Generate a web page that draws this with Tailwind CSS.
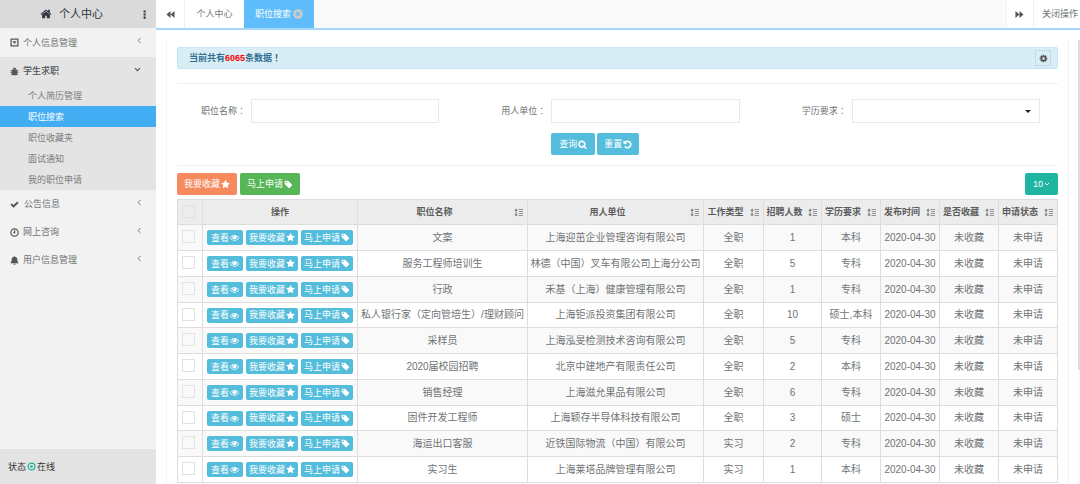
<!DOCTYPE html>
<html lang="zh-CN">
<head>
<meta charset="utf-8">
<meta name="viewport" content="width=device-width, initial-scale=1">
<title>职位搜索</title>
<script src="https://cdn.jsdelivr.net/npm/@tailwindcss/browser@4"></script>
</head>
<body class="flex h-screen overflow-hidden bg-white font-['Liberation_Sans','Noto_Sans_CJK_SC',sans-serif] text-[9px] leading-[14px] text-[#707375]">

<svg class="hidden" aria-hidden="true">
  <symbol id="star" viewBox="0 0 1792 1792"><path d="M1728 647q0 22-26 48l-363 354 86 500q1 7 1 20 0 21-10.500 35.500t-30.500 14.500q-19 0-40-12l-449-236-449 236q-22 12-40 12-21 0-31.500-14.500t-10.500-35.500q0-6 2-20l86-500-364-354q-25-27-25-48 0-37 56-46l502-73 225-455q19-41 49-41t49 41l225 455 502 73q56 9 56 46z"/></symbol>
  <symbol id="tag" viewBox="0 0 1792 1792"><path d="M576 448q0-53-37.500-90.500t-90.500-37.500-90.500 37.500-37.500 90.500 37.500 90.500 90.500 37.500 90.500-37.500 37.500-90.500zm1067 576q0 53-37 90l-491 492q-39 37-91 37-53 0-90-37l-715-716q-38-37-64.500-101t-26.500-117v-416q0-52 38-90t90-38h416q53 0 117 26.500t102 64.500l715 714q37 39 37 91z"/></symbol>
  <symbol id="search" viewBox="0 0 1792 1792"><path d="M1216 832q0-185-131.500-316.500t-316.500-131.500-316.500 131.500-131.500 316.500 131.500 316.500 316.500 131.500 316.500-131.500 131.500-316.500zm512 832q0 52-38 90t-90 38q-54 0-90-38l-343-342q-179 124-399 124-143 0-273.500-55.500t-225-150-150-225-55.500-273.500 55.500-273.500 150-225 225-150 273.500-55.500 273.500 55.500 225 150 150 225 55.500 273.500q0 220-124 399l343 343q37 37 37 90z" stroke="currentColor" stroke-width="90"/></symbol>
  <symbol id="eye" viewBox="0 0 1792 1792"><path d="M1664 960q-152-236-381-353 61 104 61 225 0 185-131.500 316.500t-316.500 131.500-316.500-131.500-131.500-316.500q0-121 61-225-229 117-381 353 133 205 333.500 326.500t434.500 121.500 434.500-121.500 333.500-326.500zm-720-384q0-20-14-34t-34-14q-125 0-214.500 89.500t-89.500 214.500q0 20 14 34t34 14 34-14 14-34q0-86 61-147t147-61q20 0 34-14t14-34zm848 384q0 34-20 69-140 230-376.500 368.500t-499.500 138.500-499.500-139-376.500-368q-20-35-20-69t20-69q140-229 376.500-368t499.500-139 499.500 139 376.500 368q20 35 20 69z"/></symbol>
  <symbol id="home" viewBox="0 0 1792 1792"><path d="M1472 992v480q0 26-19 45t-45 19h-384v-384h-256v384h-384q-26 0-45-19t-19-45v-480q0-1 .5-3t.5-3l575-474 575 474q1 2 1 6zm223-69l-62 74q-8 9-21 11h-3q-13 0-21-7l-692-577-692 577q-12 8-24 7-13-2-21-11l-62-74q-8-10-7-23.500t11-21.500l719-599q32-26 76-26t76 26l244 204v-195q0-14 9-23t23-9h192q14 0 23 9t9 23v408l219 182q10 8 11 21.500t-7 23.500z"/></symbol>
  <symbol id="check" viewBox="0 0 1792 1792"><path d="M1671 566q0 40-28 68l-724 724-136 136q-28 28-68 28t-68-28l-136-136-362-362q-28-28-28-68t28-68l136-136q28-28 68-28t68 28l294 295 656-657q28-28 68-28t68 28l136 136q28 28 28 68z"/></symbol>
  <symbol id="undo" viewBox="0 0 1792 1792"><path d="M1664 896q0 156-61 298t-164 245-245 164-298 61q-172 0-327-72.500t-264-204.500q-7-10-6.500-22.500t8.500-20.500l137-138q10-9 25-9 16 2 23 12 73 95 179 147t225 52q104 0 198.500-40.500t163.500-109.500 109.500-163.500 40.500-198.500-40.500-198.500-109.500-163.500-163.500-109.500-198.500-40.500q-98 0-188 35.500t-160 101.500l137 138q31 30 14 69-17 40-59 40h-448q-26 0-45-19t-19-45v-448q0-42 40-59 39-17 69 14l130 129q107-101 244.500-156.500t284.500-55.500q156 0 298 61t245 164 164 245 61 298z" stroke="currentColor" stroke-width="70"/></symbol>
  <symbol id="cog" viewBox="0 0 1792 1792"><path d="M1152 896q0-106-75-181t-181-75-181 75-75 181 75 181 181 75 181-75 75-181zm512-109v222q0 12-8 23t-20 13l-185 28q-19 54-39 91 35 50 107 138 10 12 10 25t-9 23q-27 37-99 108t-94 71q-12 0-26-9l-138-108q-44 23-91 38-16 136-29 186-7 28-36 28h-222q-14 0-24.500-8.500t-11.500-21.500l-28-184q-49-16-90-37l-141 107q-10 9-25 9-14 0-25-11-126-114-165-168-7-10-7-23 0-12 8-23 15-21 51-66.500t54-70.500q-27-50-41-99l-183-27q-13-2-21-12.500t-8-23.500v-222q0-12 8-23t19-13l186-28q14-46 39-92-40-57-107-138-10-12-10-24 0-10 9-23 26-36 98.500-107.500t94.500-71.500q13 0 26 10l138 107q44-23 91-38 16-136 29-186 7-28 36-28h222q14 0 24.500 8.500t11.500 21.500l28 184q49 16 90 37l142-107q9-9 24-9 13 0 25 10 129 119 165 170 7 8 7 22 0 12-8 23-15 21-51 66.500t-54 70.500q26 50 41 98l183 28q13 2 21 12.500t8 23.500z"/></symbol>
  <symbol id="back" viewBox="0 0 10 10"><path d="M5 1v8L.5 5zM9.500 1v8L5 5z"/></symbol>
  <symbol id="fwd" viewBox="0 0 10 10"><path d="M.5 1v8L5 5zM5 1v8l4.500-4z"/></symbol>
  <symbol id="caretbox" viewBox="0 0 10 10"><path fill-rule="evenodd" d="M1.500.5h7a1 1 0 0 1 1 1v7a1 1 0 0 1-1 1h-7a1 1 0 0 1-1-1v-7a1 1 0 0 1 1-1zm.4 1.400v6.200h6.200V1.900zM2.700 3.600h4.600L5 6.800z"/></symbol>
  <symbol id="bug" viewBox="0 0 10 10"><path d="M3 2.700C3 .1 7 .1 7 2.700zM2.200 3.100h5.600v5.100c-1 1.400-4.600 1.400-5.600 0zM.8 3.200l1.500.8v.9L.8 4.100zM9.200 3.200l-1.500.8v.9l1.500-.8zM.5 5.400h1.800v.9H.5zM7.700 5.400h1.800v.9H7.700zM.8 8.600l1.500-1.400v1.200L1.300 9.300zM9.200 8.600L7.700 7.200v1.200l1 .9z"/></symbol>
  <symbol id="clock" viewBox="0 0 10 10"><g fill="none" stroke="currentColor" stroke-width="1.300"><circle cx="5" cy="5" r="4.100"/><path d="M5.200 2.600v2.700H3.400"/></g></symbol>
  <symbol id="bell" viewBox="0 0 10 10"><path d="M5 .2c.5 0 .7.300.7.700C7.300 1.300 8.200 2.500 8.200 4.200c0 1.800.5 2.900 1.600 3.900H.2C1.300 7.100 1.800 6 1.800 4.200c0-1.700.9-2.900 2.500-3.300 0-.4.2-.7.700-.7zM3.700 8.500h2.600c0 1.600-2.600 1.600-2.600 0z"/></symbol>
  <symbol id="left" viewBox="0 0 10 10"><path d="M6.500 1.500L3 5l3.500 3.500" fill="none" stroke="currentColor" stroke-width="1.400"/></symbol>
  <symbol id="down" viewBox="0 0 10 10"><path d="M1.500 3.200L5 6.700l3.500-3.500" fill="none" stroke="currentColor" stroke-width="1.500"/></symbol>
  <symbol id="dots" viewBox="0 0 10 10"><path d="M4 .5h2.300v2.300H4zM4 3.900h2.300v2.300H4zM4 7.300h2.300v2.300H4z"/></symbol>
  <symbol id="sort" viewBox="0 0 10 10"><path d="M2.300.5L4.300 3H2.800v4h1.500l-2 2.500L.3 7h1.500V3H.3zM5 1h5v.9H5zM5.500 3.300H10v.9H5.500zM5.500 5.700H10v.9H5.500zM5 8h5v.9H5z"/></symbol>
  <symbol id="close" viewBox="0 0 10 10"><circle cx="5" cy="5" r="4.800"/><path d="M3.200 3.200l3.600 3.600M6.800 3.200L3.200 6.800" stroke="#5fbdfb" stroke-width="1.300"/></symbol>
  <symbol id="ring" viewBox="0 0 10 10"><circle cx="5" cy="5" r="3.800" fill="none" stroke="currentColor" stroke-width="1.300"/><circle cx="5" cy="5" r="1.500"/></symbol>
</svg>

<aside class="flex w-[156px] shrink-0 flex-col bg-[#f2f2f2]">
  <header class="flex h-7 shrink-0 items-center justify-between bg-[#dadada] pr-[7px] pl-10 text-[11px] text-[#2f3640]">
    <a href="#" class="flex items-center gap-[7px]"><svg class="size-3 fill-current"><use href="#home"/></svg>个人中心</a>
    <button type="button" aria-label="菜单"><svg class="size-[9px] fill-current"><use href="#dots"/></svg></button>
  </header>
  <nav class="flex-1">
    <a href="#" class="flex h-[29px] items-center gap-1 pr-[13px] pl-[10px]"><svg class="size-[9px] fill-[#555]"><use href="#caretbox"/></svg><span class="flex-1">个人信息管理</span><svg class="mb-1 size-[7px]"><use href="#left"/></svg></a>
    <div class="bg-[#e4e4e4]">
      <a href="#" class="flex h-7 items-center gap-1 pr-[15px] pl-[10px] font-medium text-[#4c5257]"><svg class="size-[9px] fill-[#555]"><use href="#bug"/></svg><span class="flex-1">学生求职</span><svg class="mb-1 size-[7px]"><use href="#down"/></svg></a>
      <a href="#" class="flex h-[21px] items-center pl-7 text-[#7b7d7f]">个人简历管理</a>
      <a href="#" class="flex h-[21px] items-center bg-[#42adf2] pl-7 text-white">职位搜索</a>
      <a href="#" class="flex h-[21px] items-center pl-7 text-[#7b7d7f]">职位收藏夹</a>
      <a href="#" class="flex h-[21px] items-center pl-7 text-[#7b7d7f]">面试通知</a>
      <a href="#" class="flex h-[21px] items-center pl-7 text-[#7b7d7f]">我的职位申请</a>
    </div>
    <a href="#" class="flex h-7 items-center gap-[5px] pr-[13px] pl-[10px]"><svg class="size-[9px] fill-[#555]"><use href="#check"/></svg><span class="flex-1">公告信息</span><svg class="mb-1 size-[7px]"><use href="#left"/></svg></a>
    <a href="#" class="flex h-7 items-center gap-1 pr-[13px] pl-[10px]"><svg class="size-[9px] text-[#555]"><use href="#clock"/></svg><span class="flex-1">网上咨询</span><svg class="mb-1 size-[7px]"><use href="#left"/></svg></a>
    <a href="#" class="flex h-7 items-center gap-1 pr-[13px] pl-[10px]"><svg class="size-[9px] fill-[#555]"><use href="#bell"/></svg><span class="flex-1">用户信息管理</span><svg class="mb-1 size-[7px]"><use href="#left"/></svg></a>
  </nav>
  <footer class="flex h-[35px] shrink-0 items-center gap-px bg-[#e3e3e3] pl-2 text-[#333]">状态<svg class="size-[9px] fill-current text-[#1ab394]"><use href="#ring"/></svg>在线</footer>
</aside>

<main class="flex min-w-0 flex-1 flex-col">
  <div class="flex h-[30px] shrink-0 border-b-2 border-[#a3d5fd] bg-[#fafafa]">
    <button type="button" aria-label="向左" class="flex w-[29px] items-center justify-center border-r border-[#eee] bg-white text-[#555]"><svg class="size-[9px] fill-current"><use href="#back"/></svg></button>
    <a href="#" class="flex w-[59px] items-center justify-center bg-white text-[#777]">个人中心</a>
    <a href="#" class="flex w-[70px] items-center justify-center gap-[2px] bg-[#5fbdfb] text-white">职位搜索<svg class="size-[10px] fill-[#ccc]"><use href="#close"/></svg></a>
    <div class="flex-1"></div>
    <button type="button" aria-label="向右" class="flex w-7 items-center justify-center border-x border-[#f0f0f0] bg-white text-[#555]"><svg class="size-[9px] fill-current"><use href="#fwd"/></svg></button>
    <button type="button" class="bg-white pr-[2px] pl-[8px] whitespace-nowrap">关闭操作</button>
  </div>

  <div class="flex min-h-0 flex-1 pt-[10px] pl-[10px]">
    <section class="min-w-0 flex-1 border-x border-[#f4f4f4] px-[10px] pt-[7px]">
      <div class="flex h-[22px] items-center justify-between rounded-[2px] border border-[#c5e7ef] bg-[#d9edf7] pr-[6px] pl-[11px]">
        <p class="font-bold text-[#31708f]">当前共有<span class="text-[#f00]">6065</span>条数据<span lang="zh-TW" class="font-['Noto_Sans_CJK_TC',sans-serif]">！</span></p>
        <button type="button" aria-label="设置" class="flex size-4 items-center justify-center border border-[#bfdcea] text-[#555]"><svg class="size-[9px] fill-current"><use href="#cog"/></svg></button>
      </div>
      <hr class="mt-[14px] border-[#f0f0f0]">
      <form class="mt-[15px]">
        <div class="-mx-[10px] grid grid-cols-3">
          <div class="flex items-center gap-[5px] pr-7 pl-[34px]"><label for="job" class="shrink-0">职位名称<span lang="zh-TW" class="font-['Noto_Sans_CJK_TC',sans-serif]">：</span></label><input id="job" type="text" class="h-6 w-full min-w-0 flex-1 border border-[#e8e8e8] bg-white px-2"></div>
          <div class="flex items-center gap-[5px] pr-7 pl-[34px]"><label for="company" class="shrink-0">用人单位<span lang="zh-TW" class="font-['Noto_Sans_CJK_TC',sans-serif]">：</span></label><input id="company" type="text" class="h-6 w-full min-w-0 flex-1 border border-[#e8e8e8] bg-white px-2"></div>
          <div class="flex items-center gap-[5px] pr-7 pl-[34px]"><label for="degree" class="shrink-0">学历要求<span lang="zh-TW" class="font-['Noto_Sans_CJK_TC',sans-serif]">：</span></label>
            <div class="relative flex-1"><select id="degree" class="block h-6 w-full appearance-none border border-[#e8e8e8] bg-white px-2"><option></option><option>本科</option><option>专科</option><option>硕士</option></select><span class="pointer-events-none absolute top-[11px] right-[9px] border-x-3 border-t-3 border-x-transparent border-t-[#222]"></span></div>
          </div>
        </div>
        <div class="-mx-[10px] mt-[10px] grid grid-cols-3 text-white">
          <div class="col-start-2 flex gap-[2px] pl-[84px]">
            <button type="submit" class="flex h-[22px] items-center gap-px rounded-[2px] bg-[#54bddb] px-2">查询<svg class="size-[9px] fill-current"><use href="#search"/></svg></button>
            <button type="reset" class="flex h-[22px] items-center gap-px rounded-[2px] bg-[#54bddb] px-[7px]">重置<svg class="size-[9px] fill-current"><use href="#undo"/></svg></button>
          </div>
        </div>
      </form>
      <hr class="mt-[10px] border-[#f0f0f0]">
      <div class="mt-[7px] flex gap-[3px] text-white">
        <button type="button" class="flex h-[22px] items-center gap-px rounded-[2px] bg-[#f68a5c] px-[7px]">我要收藏<svg class="size-[9px] fill-current"><use href="#star"/></svg></button>
        <button type="button" class="flex h-[22px] items-center gap-px rounded-[2px] bg-[#57b757] px-[7px]">马上申请<svg class="size-[9px] fill-current"><use href="#tag"/></svg></button>
        <button type="button" class="ml-auto flex h-[22px] items-center gap-px rounded-[2px] bg-[#20b5a0] px-[8px]">10<svg class="size-[6px]"><use href="#down"/></svg></button>
      </div>
      <table class="mt-1 w-full table-fixed border-collapse text-center whitespace-nowrap">
        <colgroup><col class="w-[25px]"><col class="w-[155px]"><col class="w-[170px]"><col class="w-[176px]"><col class="w-[60px]"><col class="w-[58px]"><col class="w-[59px]"><col class="w-[59px]"><col class="w-[59px]"><col class="w-[59px]"></colgroup>
        <thead class="bg-[#ececec] text-[#5c5c5c]"><tr id="head" class="h-[25px]"></tr></thead>
        <tbody id="rows" class="text-[10px]"></tbody>
      </table>
    </section>
    <div class="ml-[9px] w-[2px] shrink-0 bg-[#fafafa]"><div class="h-[330px] bg-[#dcdcdc]"></div></div>
  </div>
</main>

<script>
const icon = (id) => `<svg class="size-[9px] shrink-0 fill-current"><use href="#${id}"/></svg>`;
const box = (label) => `<input type="checkbox" aria-label="${label}" class="mb-[2px] block size-[13px] appearance-none border border-[#e2e2e2]">`;
const action = (text, id, pad = 'px-[3px]') => `<button type="button" class="flex h-[15px] items-center gap-px rounded-[2px] bg-[#54bddb] ${pad} text-[9px] text-white">${text}${icon(id)}</button>`;
const columns = ['职位名称', '用人单位', '工作类型', '招聘人数', '学历要求', '发布时间', '是否收藏', '申请状态'];
const jobs = [
  ['文案', '上海迎茁企业管理咨询有限公司', '全职', 1, '本科'],
  ['服务工程师培训生', '林德（中国）叉车有限公司上海分公司', '全职', 5, '专科'],
  ['行政', '禾基（上海）健康管理有限公司', '全职', 1, '专科'],
  ['私人银行家（定向管培生）/理财顾问', '上海钜派投资集团有限公司', '全职', 10, '硕士,本科'],
  ['采样员', '上海泓旻检测技术咨询有限公司', '全职', 5, '专科'],
  ['2020届校园招聘', '北京中建地产有限责任公司', '全职', 2, '本科'],
  ['销售经理', '上海滋允果品有限公司', '全职', 6, '专科'],
  ['固件开发工程师', '上海颖存半导体科技有限公司', '全职', 3, '硕士'],
  ['海运出口客服', '近铁国际物流（中国）有限公司', '实习', 2, '专科'],
  ['实习生', '上海莱塔品牌管理有限公司', '实习', 1, '本科'],
];
document.getElementById('head').innerHTML =
  `<th class="border border-[#dddddd] pl-1">${box('全选')}</th><th class="border border-[#dddddd]">操作</th>` +
  columns.map((c) => `<th class="border border-[#dddddd] pr-1"><div class="flex items-center gap-[3px]"><span class="flex-1">${c}</span><svg class="size-[9px] shrink-0 fill-[#777]"><use href="#sort"/></svg></div></th>`).join('');
document.getElementById('rows').innerHTML = jobs.map((job) =>
  `<tr class="h-[26px] odd:bg-[#f9f9f9] nth-[4n]:h-[25px]"><td class="border border-[#dddddd] pl-1">${box('选择' + job[0])}</td>` +
  `<td class="border border-[#dddddd]"><div class="flex justify-center gap-[3px]">${action('查看', 'eye', 'px-1')}${action('我要收藏', 'star')}${action('马上申请', 'tag')}</div></td>` +
  [...job, '2020-04-30', '未收藏', '未申请'].map((v) => `<td class="border border-[#dddddd]">${v}</td>`).join('') + '</tr>').join('');
</script>
</body>
</html>
